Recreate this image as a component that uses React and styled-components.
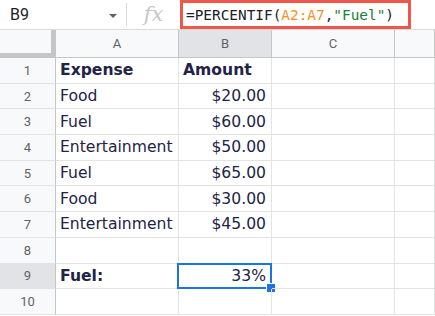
import React from "react";
import styled, { createGlobalStyle } from "styled-components";

const Global = createGlobalStyle`
  html, body { margin: 0; padding: 0; background: #fff; }
  body { width: 435px; height: 316px; overflow: hidden; }
`;

const Page = styled.div`
  display: flex;
  flex-direction: column;
  width: 435px;
  height: 316px;
  overflow: hidden;
  background: #fff;
`;

const FormulaBar = styled.div`
  display: flex;
  align-items: stretch;
  height: 29px;
  border-bottom: 1px solid #d9d9d9;
  box-sizing: content-box;
`;

const NameBox = styled.div`
  width: 126px;
  display: flex;
  align-items: center;
  justify-content: space-between;
  padding: 0 9px 0 10px;
  box-sizing: border-box;
  font-family: Roboto, "Liberation Sans", sans-serif;
  font-size: 16px;
  color: #202124;
`;

const Caret = styled.span`
  width: 0;
  height: 0;
  border-left: 4px solid transparent;
  border-right: 4px solid transparent;
  border-top: 4px solid #5f6368;
  margin-top: 2px;
`;

const Sep = styled.div`
  width: 1px;
  margin: 3px 0;
  background: #dadce0;
`;

const Fx = styled.div`
  width: 53px;
  display: flex;
  align-items: center;
  justify-content: center;
  font-family: "DejaVu Serif", "Liberation Serif", serif;
  font-style: italic;
  font-size: 21px;
  color: #c4c7cb;
  padding-bottom: 2px;
  box-sizing: border-box;
`;

const FormulaInput = styled.div`
  width: 231px;
  height: 29px;
  box-sizing: border-box;
  border: 3px solid #f0574b;
  display: flex;
  align-items: center;
  padding-left: 3px;
  font-family: "DejaVu Sans Mono", "Liberation Mono", monospace;
  font-size: 14.4px;
  color: #202124;
  white-space: nowrap;
`;

const Tok = styled.span`
  color: ${(p) => p.$c};
`;

const Grid = styled.div`
  display: grid;
  grid-template-columns: 56px 123px 93px 123px 1fr;
  grid-template-rows: 28px repeat(10, 25.7px);
  position: relative;
`;

const Corner = styled.div`
  background: #f8f9fa;
  border-right: 5px solid #c4c7c5;
  border-bottom: 5px solid #c4c7c5;
`;

const ColHead = styled.div`
  background: ${(p) => (p.$active ? "#e1e3e6" : "#f8f9fa")};
  border-right: 1px solid #c4c7c5;
  border-bottom: 1px solid #c4c7c5;
  display: flex;
  align-items: center;
  justify-content: center;
  font-family: Roboto, "Liberation Sans", sans-serif;
  font-size: 13px;
  color: #5f6368;
`;

const RowHead = styled.div`
  background: ${(p) => (p.$active ? "#e1e3e6" : "#f8f9fa")};
  border-right: 1px solid #c4c7c5;
  border-bottom: 1px solid #e2e3e3;
  display: flex;
  align-items: center;
  justify-content: center;
  font-family: Roboto, "Liberation Sans", sans-serif;
  font-size: 13px;
  color: #5f6368;
`;

const Cell = styled.div`
  border-right: 1px solid #e2e3e3;
  border-bottom: 1px solid #e2e3e3;
  display: flex;
  align-items: center;
  justify-content: ${(p) => (p.$right ? "flex-end" : "flex-start")};
  padding: 0 5px 0 4px;
  font-family: "DejaVu Sans", Verdana, sans-serif;
  font-size: 15.6px;
  font-weight: ${(p) => (p.$bold ? 700 : 400)};
  color: #222346;
  white-space: nowrap;
  overflow: visible;
  position: relative;
  box-sizing: border-box;
`;

const Selection = styled.div`
  position: absolute;
  inset: -1px -1px -1px -2px;
  border: 2px solid #1a73e8;
  pointer-events: none;
`;

const Handle = styled.div`
  position: absolute;
  right: -6px;
  bottom: -6px;
  width: 8px;
  height: 8px;
  background: #1a73e8;
  border: 1px solid #fff;
`;

const SelText = styled.span`
  position: relative;
`;

const rows = [
  ["Expense", "Amount", true],
  ["Food", "$20.00"],
  ["Fuel", "$60.00"],
  ["Entertainment", "$50.00"],
  ["Fuel", "$65.00"],
  ["Food", "$30.00"],
  ["Entertainment", "$45.00"],
  ["", ""],
  ["Fuel:", "33%", "sel"],
  ["", ""],
];

export default function App() {
  return (
    <Page>
      <Global />
      <FormulaBar>
        <NameBox>
          B9
          <Caret />
        </NameBox>
        <Sep />
        <Fx>fx</Fx>
        <FormulaInput>
          =PERCENTIF(<Tok $c="#f6921e">A2:A7</Tok>,<Tok $c="#188038">"Fuel"</Tok>)
        </FormulaInput>
      </FormulaBar>
      <Grid>
        <Corner />
        <ColHead>A</ColHead>
        <ColHead $active>B</ColHead>
        <ColHead>C</ColHead>
        <ColHead />
        {rows.map(([a, b, flag], i) => (
          <React.Fragment key={i}>
            <RowHead $active={flag === "sel"}>{i + 1}</RowHead>
            <Cell $bold={flag === true || flag === "sel"}>{a}</Cell>
            <Cell $right={flag !== true} $bold={flag === true}>
              {flag === "sel" ? (
                <>
                  <Selection>
                    <Handle />
                  </Selection>
                  <SelText>{b}</SelText>
                </>
              ) : (
                b
              )}
            </Cell>
            <Cell />
            <Cell />
          </React.Fragment>
        ))}
      </Grid>
    </Page>
  );
}
